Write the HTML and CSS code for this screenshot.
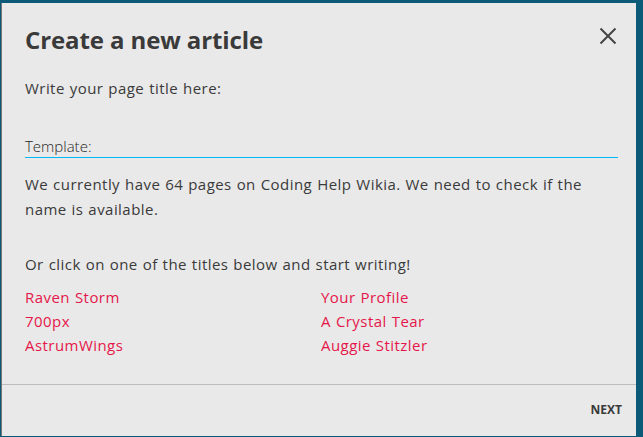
FILE: index.html
```html
<!DOCTYPE html>
<html>
<head>
<meta charset="utf-8">
<link rel="stylesheet" href="styles.css">
</head>
<body>
<div class="dialog">
  <div class="header">
    <h1 class="title">Create a new article</h1>
    <button class="close" aria-label="Close">
      <svg width="18" height="18" viewBox="0 0 18 18"><path d="M1.5 1.5 L16.5 16.5 M16.5 1.5 L1.5 16.5" stroke="#444" stroke-width="2" fill="none"/></svg>
    </button>
  </div>
  <div class="content">
    <p class="prompt">Write your page title here:</p>
    <div class="field">Template:</div>
    <p class="info">We currently have 64 pages on Coding Help Wikia. We need to check if the name is available.</p>
    <p class="prompt2">Or click on one of the titles below and start writing!</p>
    <div class="links">
      <a>Raven Storm</a>
      <a>Your Profile</a>
      <a>700px</a>
      <a>A Crystal Tear</a>
      <a>AstrumWings</a>
      <a>Auggie Stitzler</a>
    </div>
  </div>
  <div class="footer">
    <button class="next">NEXT</button>
  </div>
</div>
</body>
</html>
```

FILE: styles.css
```css
html, body {
  margin: 0;
  padding: 0;
  height: 100%;
}
body {
  background: #0b5a78;
  font-family: "Open Sans", "Liberation Sans", sans-serif;
  color: #3a3a3a;
  overflow: hidden;
}
.dialog {
  margin: 3px 0 0 1px;
  width: 635px;
  height: 433px;
  background: #e9e9e9;
  border-left: 1px solid #777;
  box-sizing: border-box;
  display: flex;
  flex-direction: column;
}
.header {
  display: flex;
  justify-content: space-between;
  align-items: flex-start;
  padding: 22px 19px 0 23px;
}
.title {
  margin: 0;
  font-size: 24px;
  font-weight: 700;
  line-height: 30px;
  color: #3a3a3a;
  letter-spacing: -0.1px;
}
.close {
  background: none;
  border: 0;
  padding: 0;
  margin-top: 2px;
  width: 18px;
  height: 18px;
  display: flex;
}
.content {
  padding: 0 18px 0 23px;
  font-size: 15px;
  letter-spacing: 0.45px;
  word-spacing: 0.6px;
}
.prompt {
  margin: 21px 0 0;
  line-height: 24px;
}
.field {
  margin-top: 34px;
  height: 24px;
  box-sizing: border-box;
  font-weight: 300;
  font-size: 15px;
  line-height: 22px;
  padding-top: 1px;
  letter-spacing: 0;
  border-bottom: 1px solid #00b6f7;
  color: #1f1f1f;
}
.info {
  margin: 14px 0 0;
  line-height: 25px;
  max-width: 565px;
}
.prompt2 {
  margin: 30px 0 0;
  line-height: 24px;
}
.links {
  margin-top: 9px;
  display: grid;
  grid-template-columns: 296px 1fr;
  row-gap: 0;
}
.links a {
  color: #e5174a;
  line-height: 24px;
  font-size: 15px;
}
.footer {
  margin-top: auto;
  border-top: 1px solid #bdbdbd;
  height: 52px;
  box-sizing: border-box;
  display: flex;
  justify-content: flex-end;
  align-items: center;
  padding: 0 14px 3px 0;
}
.next {
  background: none;
  border: 0;
  font-family: inherit;
  font-weight: 700;
  font-size: 12px;
  color: #3a3a3a;
  padding: 0;
}
```
